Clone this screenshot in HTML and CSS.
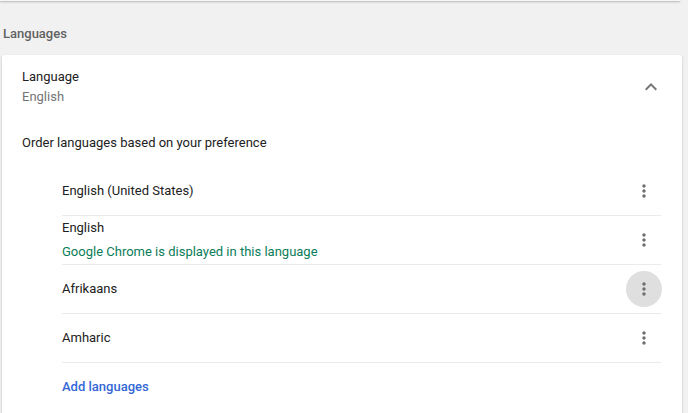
FILE: index.html
```html
<!DOCTYPE html>
<html>
<head>
<meta charset="utf-8">
<link rel="stylesheet" href="styles.css">
</head>
<body>
<div class="top-card"></div>
<div class="section-title">Languages</div>
<div class="card">
  <div class="header-row">
    <div class="header-text">
      <div class="primary">Language</div>
      <div class="secondary">English</div>
    </div>
    <div class="icon-btn">
      <svg width="24" height="24" viewBox="0 0 24 24"><path d="M12 8l-6 6 1.41 1.41L12 10.83l4.59 4.58L18 14z" fill="#757575"/></svg>
    </div>
  </div>
  <div class="order-text">Order languages based on your preference</div>
  <div class="list">
    <div class="row">
      <div class="row-text"><div class="primary">English (United States)</div></div>
      <div class="kebab"><svg width="20" height="20" viewBox="0 0 24 24"><path d="M12 8c1.1 0 2-.9 2-2s-.9-2-2-2-2 .9-2 2 .9 2 2 2zm0 2c-1.1 0-2 .9-2 2s.9 2 2 2 2-.9 2-2-.9-2-2-2zm0 6c-1.1 0-2 .9-2 2s.9 2 2 2 2-.9 2-2-.9-2-2-2z" fill="#6e6e6e"/></svg></div>
    </div>
    <div class="row two-line">
      <div class="row-text"><div class="primary">English</div><div class="green">Google Chrome is displayed in this language</div></div>
      <div class="kebab"><svg width="20" height="20" viewBox="0 0 24 24"><path d="M12 8c1.1 0 2-.9 2-2s-.9-2-2-2-2 .9-2 2 .9 2 2 2zm0 2c-1.1 0-2 .9-2 2s.9 2 2 2 2-.9 2-2-.9-2-2-2zm0 6c-1.1 0-2 .9-2 2s.9 2 2 2 2-.9 2-2-.9-2-2-2z" fill="#6e6e6e"/></svg></div>
    </div>
    <div class="row">
      <div class="row-text"><div class="primary">Afrikaans</div></div>
      <div class="kebab hover"><svg width="20" height="20" viewBox="0 0 24 24"><path d="M12 8c1.1 0 2-.9 2-2s-.9-2-2-2-2 .9-2 2 .9 2 2 2zm0 2c-1.1 0-2 .9-2 2s.9 2 2 2 2-.9 2-2-.9-2-2-2zm0 6c-1.1 0-2 .9-2 2s.9 2 2 2 2-.9 2-2-.9-2-2-2z" fill="#6e6e6e"/></svg></div>
    </div>
    <div class="row">
      <div class="row-text"><div class="primary">Amharic</div></div>
      <div class="kebab"><svg width="20" height="20" viewBox="0 0 24 24"><path d="M12 8c1.1 0 2-.9 2-2s-.9-2-2-2-2 .9-2 2 .9 2 2 2zm0 2c-1.1 0-2 .9-2 2s.9 2 2 2 2-.9 2-2-.9-2-2-2zm0 6c-1.1 0-2 .9-2 2s.9 2 2 2 2-.9 2-2-.9-2-2-2z" fill="#6e6e6e"/></svg></div>
    </div>
    <div class="row">
      <div class="row-text"><div class="link">Add languages</div></div>
    </div>
  </div>
</div>
</body>
</html>
```
FILE: styles.css
```css
html, body {
  margin: 0;
  padding: 0;
  background: #f1f1f1;
  font-family: Roboto, "Liberation Sans", sans-serif;
  font-size: 13px;
  color: #212121;
  overflow: hidden;
}
.top-card {
  width: 680px;
  height: 1px;
  background: #f6f6f6;
  box-shadow: 0 1px 2px rgba(0,0,0,0.35);
}
.section-title {
  margin-top: 23px;
  padding-left: 3px;
  line-height: 20px;
  height: 31px;
  font-weight: 500;
  color: #616161;
}
.card {
  margin-left: 2px;
  width: 680px;
  background: #fff;
  border-radius: 2px;
  box-shadow: 0 1px 2px rgba(0,0,0,0.18), 0 1px 3px rgba(0,0,0,0.08);
  min-height: 370px;
}
.header-row {
  height: 62px;
  padding-top: 1px;
  display: flex;
  align-items: center;
  padding-left: 20px;
  padding-right: 13px;
}
.header-text {
  flex: 1;
  line-height: 20px;
}
.primary { color: #212121; }
.secondary { color: #757575; }
.green { color: #0b7d5a; }
.link { color: #3367d6; font-weight: 500; }
.icon-btn {
  width: 36px;
  height: 36px;
  display: flex;
  align-items: center;
  justify-content: center;
}
.icon-btn svg, .kebab svg { display: block; }
.order-text {
  height: 49px;
  box-sizing: border-box;
  padding-top: 15px;
  padding-left: 20px;
  line-height: 20px;
}
.list {
  margin-left: 60px;
  margin-right: 21px;
}
.row {
  height: 48px;
  display: flex;
  align-items: center;
  border-top: 1px solid #ebebeb;
}
.row:first-child { border-top: none; }
.row-text {
  flex: 1;
  line-height: 20px;
}
.two-line .row-text { line-height: 24px; }
.kebab {
  width: 36px;
  height: 36px;
  margin-right: -1px;
  border-radius: 50%;
  display: flex;
  align-items: center;
  justify-content: center;
}
.kebab.hover { background: #dfdfdf; }
```
